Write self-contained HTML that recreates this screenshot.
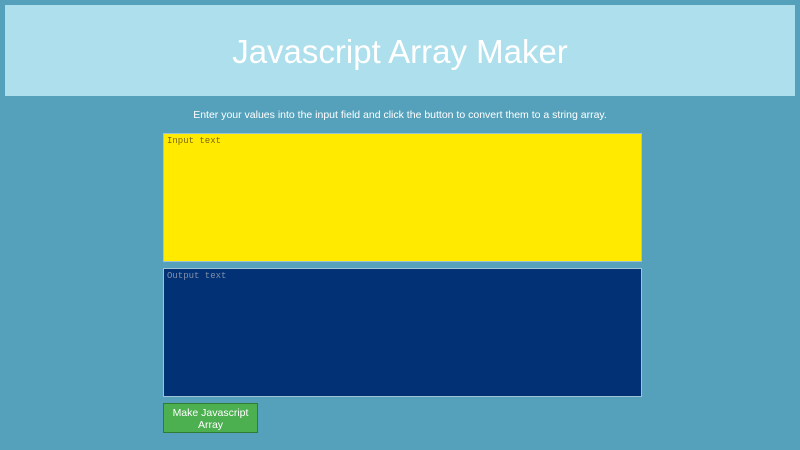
<!DOCTYPE html>
<html><head><meta charset="utf-8"><style>
*{margin:0;padding:0;box-sizing:border-box}
body{width:800px;height:450px;background:#55a1bc;font-family:"Liberation Sans",sans-serif;position:relative;overflow:hidden}
.hdr{position:absolute;left:5px;top:5px;width:790px;height:91px;background:#aedfec;text-align:center;color:#fff;font-size:33px;line-height:93px;font-weight:300}
.sub{position:absolute;top:109px;left:0;width:800px;text-align:center;color:#fff;font-size:10.5px}
.box{position:absolute;left:163px;width:479px;font-family:"Liberation Mono",monospace;font-size:9px;padding:2px 3px;border:1px solid #9fc4d4}
.in{top:133px;height:129px;background:#ffea00;color:#7a6a10}
.out{top:268px;height:129px;background:#023176;color:#8190a8}
.btn{position:absolute;left:163px;top:403px;width:95px;height:30px;background:#4caf50;border:1px solid #2e7d32;color:#fff;font-size:10.5px;text-align:center;line-height:12px;padding-top:3px}
</style></head><body>
<div class="hdr">Javascript Array Maker</div>
<div class="sub">Enter your values into the input field and click the button to convert them to a string array.</div>
<div class="box in">Input text</div>
<div class="box out">Output text</div>
<div class="btn">Make Javascript<br>Array</div>
</body></html>
